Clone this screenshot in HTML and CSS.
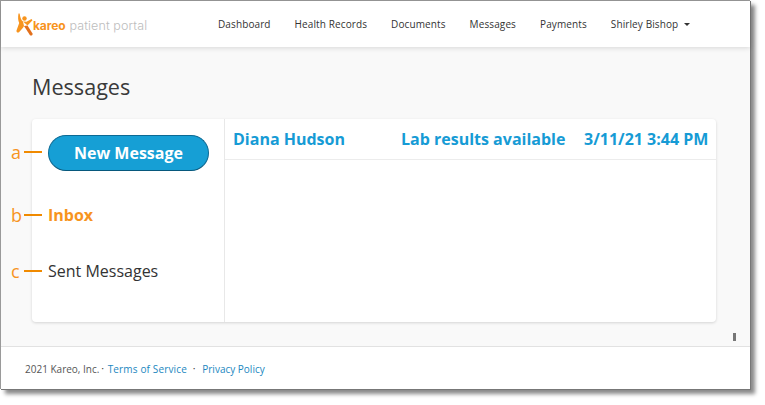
FILE: index.html
```html
<!DOCTYPE html>
<html lang="en">
<head>
<meta charset="utf-8">
<title>Messages</title>
<link rel="stylesheet" href="styles.css">
</head>
<body>
<div class="window">
  <header class="topbar">
    <div class="logo">
      <svg class="logo-mark" width="18" height="24" viewBox="0 0 18 24" aria-hidden="true">
        <circle cx="8.5" cy="5.5" r="2.2" fill="#f7941e"/>
        <path d="M2.5 0.5 C1.8 4.5 2 7.5 3.2 10 L0.5 17.5 C0.2 19 1.6 20.2 3 19.2 L7 14.8 L8 13 L7 8.6 C5.4 7.6 4.2 4.6 3.6 0.5 Z" fill="#f7941e"/>
        <path d="M7 8.6 L10.5 8.8 L15.5 6 L16.5 7.2 L11.5 12.5 Z" fill="#f7941e"/>
        <path d="M8 13 L11.5 12.5 L16.5 20.5 C17 22.5 15 23 14 22.2 Z" fill="#e2701c"/>
      </svg>
      <span class="logo-name">kareo</span>
      <span class="logo-sub">patient portal</span>
    </div>
    <nav class="nav">
      <a>Dashboard</a>
      <a>Health Records</a>
      <a>Documents</a>
      <a>Messages</a>
      <a>Payments</a>
      <a class="user">Shirley Bishop<i class="caret"></i></a>
    </nav>
  </header>
  <main class="content">
    <h1 class="title">Messages</h1>
    <section class="card">
      <aside class="side">
        <button class="new-btn">New Message</button>
        <a class="folder active">Inbox</a>
        <a class="folder">Sent Messages</a>
      </aside>
      <div class="list">
        <div class="row">
          <span class="from">Diana Hudson</span>
          <span class="subject">Lab results available</span>
          <span class="date">3/11/21 3:44 PM</span>
        </div>
      </div>
    </section>
    <i class="scroll-mark"></i>
  </main>
  <footer class="footer">
    <span>2021 Kareo, Inc.</span><span class="dot">•</span><a class="terms">Terms of Service</a><span class="dot">•</span><a>Privacy Policy</a>
  </footer>
  <div class="callout call-a"><span>a</span><i></i></div>
  <div class="callout call-b"><span>b</span><i></i></div>
  <div class="callout call-c"><span>c</span><i></i></div>
</div>
</body>
</html>
```
FILE: styles.css
```css
* { box-sizing: border-box; }
html, body { margin: 0; padding: 0; background: #fff; }
body { width: 765px; height: 405px; overflow: hidden; font-family: "Open Sans", sans-serif; }
.window {
  position: relative;
  width: 750px;
  height: 389px;
  border: 1px solid #9a9a9a;
  border-width: 1px 0 0 1px;
  display: flex;
  flex-direction: column;
  background: #fff;
  box-shadow: 1px 1px 0 #777, 5px 5px 4px #8a8a8a;
}
.topbar {
  height: 46px;
  flex: none;
  display: flex;
  align-items: center;
  background: #fff;
  box-shadow: 0 1px 5px rgba(0,0,0,.14);
  position: relative;
  z-index: 1;
}
.logo { display: flex; align-items: center; margin-left: 15px; width: 202px; }
.logo-mark { flex: none; margin-top: 1px; }
.logo-name { font: 700 12px "Inter", sans-serif; color: #f7941e; margin-left: -1px; letter-spacing: -.1px; padding-top: 2px; }
.logo-sub { font: 300 12.5px "Inter", sans-serif; color: #bdbdbd; margin-left: 4px; padding-top: 2px; letter-spacing: .1px; }
.nav { display: flex; gap: 24px; font-size: 10px; color: #333; letter-spacing: .11px; }
.nav a { display: flex; align-items: center; }
.caret { display: inline-block; margin-left: 6px; border: 3px solid transparent; border-top-color: #333; border-bottom: 0; }
.content { flex: 1; background: #f9f9f9; padding: 25px 34px 0 31px; position: relative; }
.title { margin: 0 0 17px; font-size: 21.6px; line-height: 30px; font-weight: 400; color: #3a3a3a; }
.card {
  display: flex;
  height: 203px;
  background: #fff;
  border-radius: 4px;
  box-shadow: 0 1px 3px rgba(0,0,0,.15);
}
.side { width: 193px; flex: none; border-right: 1px solid #e8e8e8; padding: 16px 15px 0 16px; display: flex; flex-direction: column; }
.new-btn {
  width: 161px;
  height: 36px;
  padding: 0;
  border: 1px solid #0c6a94;
  border-bottom-color: #07587c;
  border-radius: 18px;
  background: #169fd5;
  color: #fff;
  font: 700 16px "Open Sans", sans-serif;
}
.folder { font-size: 16px; line-height: 22px; color: #333; margin-top: 34px; }
.folder.active { font-weight: 700; color: #f7941e; margin-top: 33px; }
.list { flex: 1; }
.row {
  height: 41px;
  display: flex;
  align-items: center;
  padding: 0 0 0 8px;
  border-bottom: 1px solid #ececec;
  font-size: 16px;
  font-weight: 700;
  color: #169bd5;
  white-space: nowrap;
}
.from { width: 168px; }
.subject { width: 183px; }
.scroll-mark { position: absolute; right: 14px; bottom: 5px; width: 3px; height: 8px; background: #777; }
.footer {
  height: 43px;
  flex: none;
  display: flex;
  align-items: center;
  padding: 2px 0 0 24px;
  border-top: 1px solid #e2e2e2;
  font-size: 10px;
  color: #555;
}
.footer a { color: #1b87c0; }
.footer .terms { letter-spacing: .15px; }
.dot { font-size: 6px; margin: 0 4px 0 2px; color: #444; }
.footer a + .dot { margin: 0 7px 0 6px; }
.callout { position: absolute; display: flex; align-items: center; color: #f7941e; font-size: 18px; line-height: 20px; }
.callout span { width: 23px; padding-left: 10px; }
.callout i { width: 18px; height: 2px; background: #f08a00; }
.call-a { left: 0; top: 141px; }
.call-b { left: 0; top: 204px; }
.call-c { left: 0; top: 260px; }
```
